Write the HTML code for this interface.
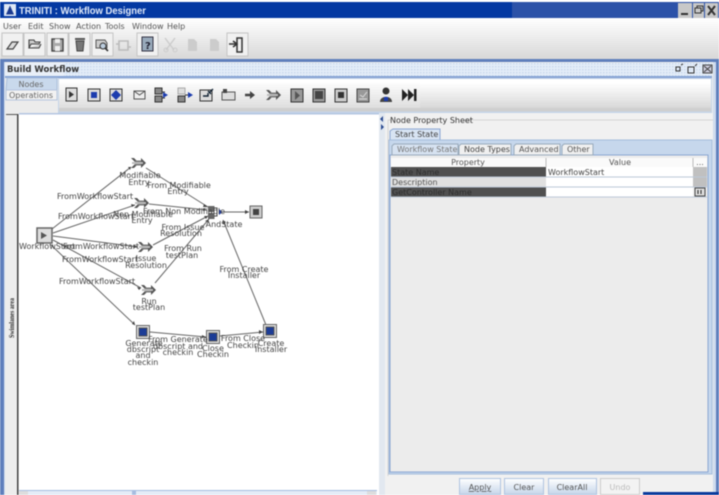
<!DOCTYPE html>
<html><head><meta charset="utf-8"><style>
html,body{margin:0;padding:0;width:719px;height:495px;overflow:hidden;background:#fff}
svg{display:block;filter:blur(.5px)}
text{font-family:"DejaVu Sans","Liberation Sans",sans-serif;font-size:8px;fill:#444}
.c{text-anchor:middle}
.m{font-size:8px;fill:#555}
.e line{stroke:#666;stroke-width:1}
</style></head><body>
<svg width="719" height="495" viewBox="0 0 719 495" xmlns="http://www.w3.org/2000/svg">
<defs>
<linearGradient id="g1" x1="0" y1="0" x2="0" y2="1"><stop offset="0" stop-color="#fff"/><stop offset="1" stop-color="#d8d8d8"/></linearGradient>
<linearGradient id="g2" x1="0" y1="0" x2="0" y2="1"><stop offset="0" stop-color="#fff"/><stop offset="1" stop-color="#c6d6ea"/></linearGradient>
<linearGradient id="g3" x1="0" y1="0" x2="0" y2="1"><stop offset="0" stop-color="#fcfcfc"/><stop offset="1" stop-color="#dedede"/></linearGradient>
<pattern id="dots" width="3" height="3" patternUnits="userSpaceOnUse"><rect width="3" height="3" fill="#e4edf8"/><rect width="1.5" height="1.5" fill="#c9d9ee"/></pattern>
<g id="merge"><path d="M-7-5l5 5-5 5h3l5-5-5-5z" fill="#555"/><path d="M-3-2.500h7v5h-7z" fill="#777"/><path d="M3-5l5 5-5 5z" fill="#555"/><rect x="-6" y="-1" width="11" height="2" fill="#bbb"/></g>
<g id="tb"><rect width="21" height="23" fill="#f1f1f1" stroke="#c4c4c4"/></g>
<g id="blue"><rect x="-6.500" y="-6.500" width="13" height="13" fill="#ddd" stroke="#666"/><rect x="-4" y="-4" width="8" height="8" fill="#1c3c96" stroke="#555"/></g>
</defs>

<!-- window chrome -->
<rect width="719" height="495" fill="#f3f3f3"/>
<rect y="0" width="719" height="2" fill="#fff"/>
<rect y="2" width="719" height="16" fill="#2c52a8"/>
<rect y="2" width="512" height="16" fill="#0439a2"/>
<rect x="4" y="4" width="12" height="12" fill="#dfe8f5"/><path d="M10 5.500l4 9H6z" fill="#1a3a90"/>
<text x="19" y="14" textLength="127" lengthAdjust="spacingAndGlyphs" style="font-size:10px;font-weight:bold;fill:#dfe8f8;font-family:'Liberation Sans',sans-serif">TRINITI : Workflow Designer</text>
<rect x="678" y="3" width="14" height="15" fill="#c8c8c8"/><rect x="681" y="13" width="7" height="2" fill="#333"/>
<rect x="693" y="3" width="11" height="15" fill="#c8c8c8"/><path d="M695 8h6v5h-6zM697 8V6h6v5h-2" fill="none" stroke="#333"/>
<rect x="705" y="3" width="13" height="15" fill="#c8c8c8"/><path d="M708 6l7 9M715 6l-7 9" stroke="#333" stroke-width="2"/>

<rect y="18" width="719" height="41" fill="url(#g1)"/>
<text x="3" y="29" class="m">User</text><text x="28" y="29" class="m">Edit</text><text x="49" y="29" class="m">Show</text><text x="76" y="29" class="m">Action</text><text x="105" y="29" class="m">Tools</text><text x="132" y="29" class="m">Window</text><text x="167" y="29" class="m">Help</text>
<g>
<use href="#tb" x="2" y="33"/><use href="#tb" x="24" y="33"/><use href="#tb" x="47" y="33"/><use href="#tb" x="69" y="33"/><use href="#tb" x="92" y="33"/><use href="#tb" x="137" y="33"/><use href="#tb" x="227" y="33"/>
<path d="M7 49l5-7h6l-5 7z" fill="#ddd" stroke="#444" stroke-width="1.200"/>
<path d="M29 48v-8h5l1 2h5l-1 2h-8l-2 4h10l2-4" fill="#ccc" stroke="#444" stroke-width="1.100"/>
<rect x="52" y="39" width="11" height="12" fill="#aaa" stroke="#444" stroke-width="1.400"/><rect x="55" y="39" width="5" height="4" fill="#eee"/><rect x="55" y="46" width="5" height="5" fill="#eee"/>
<path d="M76 41h8l-1 10h-6z" fill="#777" stroke="#444"/><rect x="75" y="38" width="10" height="2" fill="#555"/>
<path d="M96 40h9l2 3v5h-11z" fill="#ccc" stroke="#555"/><circle cx="103" cy="46" r="3" fill="#bcd" stroke="#333"/><path d="M105 48l3 3" stroke="#333" stroke-width="1.600"/>
<path d="M119 41h9v9h-9zM116 44h3M128 47h3" fill="none" stroke="#bbb" stroke-width="1.600"/>
<rect x="142" y="37" width="11" height="14" fill="#9ab" stroke="#334"/><text x="145" y="49" style="font-size:10px;font-weight:bold;fill:#223">?</text>
<path d="M165 38l9 12M175 38l-9 12" stroke="#ccc" stroke-width="1.400"/><circle cx="166" cy="50" r="2" fill="none" stroke="#ccc"/><circle cx="175" cy="50" r="2" fill="none" stroke="#ccc"/>
<path d="M188 39h6l3 3v9h-9z" fill="#ccc"/><path d="M210 39h6l3 3v9h-9z" fill="#ccc"/>
<path d="M237 38h5v14h-5zM229 44h7M233 41l4 3-4 3" fill="none" stroke="#333" stroke-width="1.500"/>
</g>

<!-- blue outer -->
<rect y="59" width="719" height="436" fill="#5f7fbc"/>
<rect x="4" y="62" width="712" height="433" fill="#cfdcee"/>
<rect x="5" y="62" width="708" height="433" fill="#f0f0f0"/>
<rect x="5" y="63" width="707" height="13" fill="url(#dots)"/>
<rect x="5" y="63" width="59" height="13" fill="#e9eff8"/>
<text x="7" y="72" style="font-size:8.500px;font-weight:bold;fill:#333">Build Workflow</text>
<rect x="5" y="76" width="707" height="2" fill="#86a3d4"/>
<rect x="676" y="67" width="4" height="4" fill="none" stroke="#333"/><path d="M681 65l2-1" stroke="#333"/>
<rect x="688" y="67" width="6" height="6" fill="none" stroke="#333"/><path d="M695 66l2-2" stroke="#333"/>
<rect x="703" y="65" width="9" height="8" fill="#ccd" stroke="#444"/><path d="M704 66l7 6M711 66l-7 6" stroke="#444"/>

<!-- ops palette -->
<rect x="5" y="78" width="708" height="35" fill="#ececec"/>
<path d="M6 90l1-12h50v12z" fill="#c9d9ec" stroke="#a9bedc"/>
<rect x="6" y="90" width="51" height="10" fill="#f2f2f2" stroke="#b5c5dd"/>
<text x="31" y="87" class="c" style="fill:#666">Nodes</text>
<text x="31" y="98" class="c" style="fill:#666">Operations</text>
<rect x="58" y="78" width="654" height="35" fill="#c4d4e8"/>
<rect x="59" y="79" width="652" height="32" fill="#fff"/>
<rect x="59" y="83" width="361" height="25" fill="url(#g3)"/>
<rect x="420" y="83" width="291" height="25" fill="url(#g1)"/>
<rect x="59" y="108" width="652" height="3.500" fill="#cfcfcf"/>

<!-- palette icons -->
<g>
<rect x="66" y="88" width="11" height="13" fill="#ddd" stroke="#333"/><path d="M69 91l5 3.500-5 3.500z" fill="#333"/>
<rect x="88" y="89" width="12" height="12" fill="#ddd" stroke="#333"/><rect x="91" y="92" width="6" height="6" fill="#1c3cae"/>
<rect x="110" y="89" width="12" height="12" fill="#ddd" stroke="#333"/><path d="M116 90l5 5-5 5-5-5z" fill="#1c3cae"/>
<rect x="134" y="91" width="11" height="8" fill="#eee" stroke="#555"/><path d="M134 91l5.500 4 5.500-4" fill="none" stroke="#555"/>
<rect x="155" y="88" width="7" height="6" fill="#888" stroke="#333"/><rect x="155" y="96" width="7" height="6" fill="#888" stroke="#333"/><path d="M162 92h3M162 98h3" stroke="#333"/><path d="M163 92l5 3-5 3z" fill="#1c3cae"/>
<rect x="178" y="88" width="7" height="6" fill="#ddd" stroke="#aaa"/><rect x="178" y="96" width="7" height="6" fill="#888" stroke="#333"/><path d="M188 92l5 3-5 3z" fill="#1c3cae"/><path d="M185 95h3" stroke="#333"/>
<rect x="200" y="90" width="12" height="11" fill="#ddd" stroke="#333"/><path d="M203 96h5v-3M208 91l3 3M213 89l-3 3" stroke="#123" stroke-width="1.400" fill="none"/>
<rect x="222" y="92" width="13" height="8" fill="#ddd" stroke="#555"/><rect x="223" y="89" width="4" height="4" fill="#444"/>
<path d="M245 95h7" stroke="#444" stroke-width="2.500"/><path d="M250 91l5 4-5 4z" fill="#444"/>
<use href="#merge" x="273" y="95"/>
<rect x="291" y="89" width="12" height="13" fill="#999" stroke="#333"/><path d="M295 91l5 4.500-5 4.500z" fill="#555"/>
<rect x="313" y="89" width="12" height="13" fill="#999" stroke="#333"/><rect x="315" y="91" width="8" height="8" fill="#444"/>
<rect x="335" y="89" width="12" height="13" fill="#ccc" stroke="#333"/><rect x="338" y="92" width="6" height="6" fill="#333"/>
<rect x="357" y="89" width="12" height="13" fill="#999" stroke="#444"/><path d="M360 95l3 2 4-5M359 99h8" stroke="#ddd" fill="none"/>
<circle cx="386" cy="91" r="3.500" fill="#333"/><path d="M380 102c0-7 12-7 12 0z" fill="#444"/><rect x="384" y="97" width="4" height="4" fill="#1c3cae"/>
<path d="M402 89l6 6-6 6zM408 89l6 6-6 6z" fill="#222"/><rect x="414" y="89" width="2.500" height="12" fill="#222"/>
</g>

<!-- swimlane -->
<rect x="5" y="113" width="13" height="382" fill="#ededed"/>
<rect x="6" y="114" width="12" height="1" fill="#555"/>
<text transform="translate(14,338) rotate(-90)" textLength="40" lengthAdjust="spacingAndGlyphs" style="font-size:7.500px;font-weight:bold;fill:#333;font-family:'Liberation Serif',serif">Swimlanes area</text>
<rect x="17" y="114" width="1.500" height="381" fill="#444"/>

<!-- canvas -->
<rect x="19" y="113" width="360" height="382" fill="#fff"/>
<rect x="19" y="113" width="360" height="1.500" fill="#b4c6e2"/>
<rect x="19" y="490" width="358" height="5" fill="#e4ecf7"/><rect x="19" y="490" width="358" height="1" fill="#a5bce0"/>
<rect x="19" y="491" width="9" height="4" fill="#ddd"/><rect x="132" y="491" width="4" height="4" fill="#a8bde0"/><rect x="367" y="491" width="9" height="4" fill="#ddd"/>

<!-- edges -->
<g class="e">
<line x1="52" y1="229" x2="131" y2="167"/>
<line x1="53" y1="233" x2="135" y2="205"/>
<line x1="53" y1="236" x2="138" y2="247"/>
<line x1="53" y1="240" x2="141" y2="288"/>
<line x1="50" y1="244" x2="135" y2="325"/>
<line x1="146" y1="168" x2="208" y2="207"/>
<line x1="149" y1="204" x2="207" y2="210"/>
<line x1="153" y1="245" x2="208" y2="216"/>
<line x1="155" y1="283" x2="209" y2="219"/>
<line x1="219" y1="212" x2="249" y2="212"/>
<line x1="266" y1="325" x2="223" y2="220"/>
<line x1="150" y1="332" x2="206" y2="337"/>
<line x1="220" y1="336" x2="263" y2="332"/>
</g>
<path d="M131 167l-3 0 2 3zM135 205l-4-1 1 3zM138 247l-4-2v3zM141 288l-4-1 2 3zM135 325l-1-4-2 3zM208 207l-4-3-1 3zM207 210l-4-2v3zM208 216l-4 0 2 3zM209 219l-4 2 3 1zM249 212l-4-2v4zM223 220l0 4 3-1zM206 337l-4-2v3zM263 332l-4-2v4z" fill="#444"/>

<!-- nodes -->
<rect x="37" y="228" width="15" height="15" fill="#ddd" stroke="#666" stroke-width="1.500"/><path d="M41 232l6 3.500-6 3.500z" fill="#555"/>
<use href="#merge" x="138" y="163"/>
<use href="#merge" x="141" y="203"/>
<use href="#merge" x="145" y="247"/>
<use href="#merge" x="148" y="290"/>
<rect x="208" y="206" width="6.500" height="6" fill="#666"/><rect x="208" y="213" width="6.500" height="6" fill="#666"/><path d="M214 208h3v8h-3" fill="none" stroke="#444"/><path d="M219 209l3.500 3-3.500 3z" fill="#1c3cae"/>
<rect x="250" y="206" width="12" height="12" fill="#ccc" stroke="#666"/><rect x="253" y="209" width="6" height="6" fill="#444"/>
<use href="#blue" x="143" y="332"/><use href="#blue" x="213" y="337"/><use href="#blue" x="270" y="331"/>

<!-- labels -->
<g>
<text x="19" y="249">WorkflowStart</text>
<text x="57" y="199">FromWorkflowStart</text>
<text x="58" y="219">FromWorkflowStart</text>
<text x="63" y="249">FromWorkflowStart</text>
<text x="62" y="262">FromWorkflowStart</text>
<text x="59" y="284">FromWorkflowStart</text>
<text x="140" y="178" class="c">Modifiable</text><text x="139" y="185" class="c">Entry</text>
<text x="179" y="188" class="c">From Modifiable</text><text x="178" y="194" class="c">Entry</text>
<text x="143" y="217" class="c">Non Modifiable</text><text x="142" y="223" class="c">Entry</text>
<text x="184" y="214" class="c">From Non Modifiable</text>
<text x="183" y="230" class="c">From Issue</text><text x="181" y="236" class="c">Resolution</text>
<text x="183" y="251" class="c">From Run</text><text x="182" y="258" class="c">testPlan</text>
<text x="146" y="261" class="c">Issue</text><text x="146" y="268" class="c">Resolution</text>
<text x="224" y="227" class="c">AndState</text>
<text x="244" y="272" class="c">From Create</text><text x="244" y="278" class="c">Installer</text>
<text x="149" y="304" class="c">Run</text><text x="149" y="310" class="c">testPlan</text>
<text x="144" y="346" class="c">Generate</text><text x="143" y="352" class="c">dbscript</text><text x="143" y="358" class="c">and</text><text x="143" y="365" class="c">checkin</text>
<text x="178" y="342" class="c">From Generate</text><text x="178" y="349" class="c">dbscript and</text><text x="178" y="355" class="c">checkin</text>
<text x="213" y="351" class="c">Close</text><text x="213" y="357" class="c">Checkin</text>
<text x="243" y="341" class="c">From Close</text><text x="243" y="348" class="c">Checkin</text>
<text x="271" y="346" class="c">Create</text><text x="271" y="352" class="c">Installer</text>
</g>

<!-- divider -->
<rect x="379" y="113" width="6" height="382" fill="#e2e8f0"/>
<path d="M383 116v6l-3-3zM381 124v6l3-3z" fill="#2a4a90"/>

<!-- property sheet -->
<rect x="385" y="113" width="328" height="382" fill="#f1f1f1"/>
<path d="M388 120V476M388 120h3M464 120h249" fill="none" stroke="#d5d5d5"/>
<text x="390" y="123" style="fill:#333">Node Property Sheet</text>
<path d="M390 140v-9l3-2h47v11z" fill="#d8e4f3" stroke="#8aa6d2"/>
<text x="395" y="137" style="fill:#444">Start State</text>
<rect x="389" y="140" width="323" height="334" fill="#c6d7ec" stroke="#a5bddc"/>
<rect x="390" y="155" width="318" height="317" fill="#ececec" stroke="#8aa6d2"/>
<path d="M392 155v-9l2-2h64v11z" fill="#d6e2f1" stroke="#9ab"/>
<path d="M459 155v-9l2-2h50v11z" fill="#f0f0f0" stroke="#9ab"/>
<path d="M514 155v-9l2-2h44v11z" fill="#f0f0f0" stroke="#9ab"/>
<path d="M562 155v-9l2-2h29v11z" fill="#f0f0f0" stroke="#9ab"/>
<text x="397" y="152" style="fill:#777">Workflow State</text>
<text x="464" y="152" style="fill:#444">Node Types</text>
<text x="519" y="152" style="fill:#555">Advanced</text>
<text x="567" y="152" style="fill:#555">Other</text>

<rect x="391" y="158" width="316" height="9" fill="#fafafa"/>
<text x="468" y="165" class="c" style="fill:#555">Property</text>
<text x="620" y="165" class="c" style="fill:#555">Value</text>
<text x="700" y="165" class="c" style="fill:#555">...</text>
<path d="M546 158v9M693 158v9" stroke="#bbb"/>
<rect x="391" y="167" width="155" height="10" fill="#505050"/>
<rect x="391" y="177" width="155" height="10" fill="#e0e0e0"/>
<rect x="391" y="187" width="155" height="10" fill="#505050"/>
<rect x="546" y="167" width="147" height="30" fill="#fff"/>
<rect x="693" y="167" width="14" height="20" fill="#c0c0c0"/>
<path d="M391 177h316M391 187h316M391 197h316" stroke="#bcc8d8"/>
<text x="392" y="175" style="fill:#2e2e2e">State Name</text>
<text x="392" y="185" style="fill:#555">Description</text>
<text x="392" y="195" style="fill:#2e2e2e">GetController Name</text>
<text x="548" y="175" style="fill:#444">WorkflowStart</text>
<rect x="695" y="188" width="10" height="8" fill="#ddd" stroke="#444"/><path d="M698 190v4M701 190v4" stroke="#222"/>

<!-- buttons -->
<rect x="459.500" y="478.500" width="41" height="16" fill="url(#g2)" stroke="#b0c4e0"/>
<rect x="504.500" y="478.500" width="39" height="16" fill="url(#g2)" stroke="#b0c4e0"/>
<rect x="548.500" y="478.500" width="48" height="16" fill="url(#g2)" stroke="#b0c4e0"/>
<rect x="600.500" y="478.500" width="39" height="16" fill="#f3f3f3" stroke="#ccc"/>
<text x="480" y="490" class="c" style="fill:#555;text-decoration:underline">Apply</text>
<text x="524" y="490" class="c" style="fill:#555">Clear</text>
<text x="572" y="490" class="c" style="fill:#555">ClearAll</text>
<text x="620" y="490" class="c" style="fill:#bbb">Undo</text>
<rect x="643" y="492" width="76" height="3" fill="#0a3a9c"/>
</svg>
</body></html>
